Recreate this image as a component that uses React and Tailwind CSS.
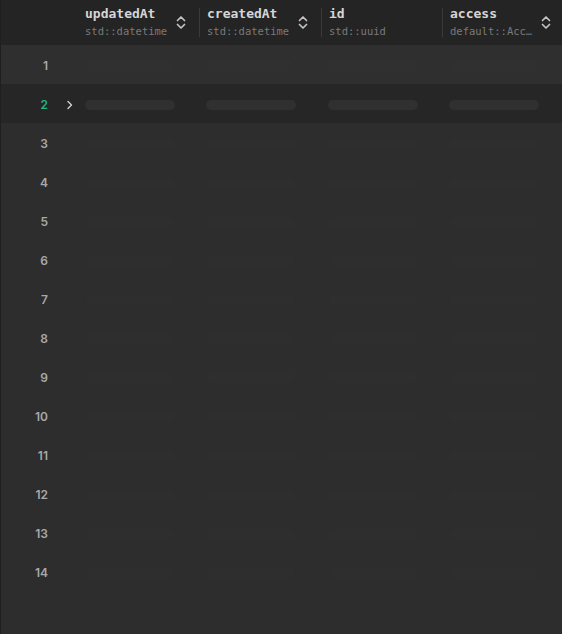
import React from "react"

const columns = [
  { name: "updatedAt", type: "std::datetime", sort: true, width: "w-[121px]" },
  { name: "createdAt", type: "std::datetime", sort: true, width: "w-[122px]" },
  { name: "id", type: "std::uuid", sort: false, width: "w-[121px]" },
  { name: "access", type: "default::Acc…", sort: true, width: "w-[122px]" },
]

const rows = Array.from({ length: 14 }, (_, i) => i + 1)

function SortIcon() {
  return (
    <svg width="10" height="15" viewBox="0 0 10 15" fill="none" stroke="#c4c4c4" strokeWidth="1.7" strokeLinecap="round" strokeLinejoin="round">
      <path d="M1.5 5.5 L5 2 L8.5 5.5" />
      <path d="M1.5 9.5 L5 13 L8.5 9.5" />
    </svg>
  )
}

function Chevron() {
  return (
    <svg width="8" height="10" viewBox="0 0 8 10" fill="none" stroke="#cfcfcf" strokeWidth="1.4" strokeLinecap="round" strokeLinejoin="round">
      <path d="M2 1.5 L5.5 5 L2 8.5" />
    </svg>
  )
}

export default function App() {
  return (
    <div className="h-[634px] w-[562px] overflow-hidden bg-[#2d2d2d] border-l border-[#1f1f1f]">
      {/* Header */}
      <div className="flex h-[45px] bg-[#242424]">
        <div className="w-[77px] shrink-0" />
        {columns.map((col, i) => (
          <div key={col.name} className={`${col.width} shrink-0 flex items-center py-2`}>
            <div className={`flex h-full flex-1 items-center pl-[7px] pr-[13px] ${i > 0 ? "border-l border-[#3a3a3a]" : ""}`}>
              <div className="flex-1 min-w-0 font-['DejaVu_Sans_Mono',monospace]">
                <div className="text-[13px] font-bold leading-[16px] text-[#d6d6d6] -mt-[3px]">{col.name}</div>
                <div className="mt-[3px] text-[10.5px] leading-[12px] text-[#7a7a7a] whitespace-nowrap">{col.type}</div>
              </div>
              {col.sort && <SortIcon />}
            </div>
          </div>
        ))}
      </div>

      {/* Rows */}
      {rows.map((n) => {
        const bg = n === 1 ? "bg-[#2f2f2f]" : n === 2 ? "bg-[#262626]" : ""
        const bar = n === 2 ? "bg-[#303030]" : n === 1 ? "bg-[#303030]" : "bg-[#2e2e2e]"
        return (
          <div key={n} className={`flex h-[39px] items-center pt-[2px] ${bg}`}>
            <div className="flex w-[77px] shrink-0 items-center">
              <span className={`w-[47px] text-right font-['Inter',sans-serif] text-[12px] font-semibold ${n === 2 ? "text-[#22b583]" : "text-[#a8a8a8]"}`}>
                {n}
              </span>
              <span className="ml-[18px] flex w-[8px] items-center">{n === 2 && <Chevron />}</span>
            </div>
            {columns.map((col) => (
              <div key={col.name} className={`${col.width} shrink-0 pl-[7px]`}>
                <div className={`h-[10px] w-[90px] rounded-full ${bar}`} />
              </div>
            ))}
          </div>
        )
      })}
    </div>
  )
}
